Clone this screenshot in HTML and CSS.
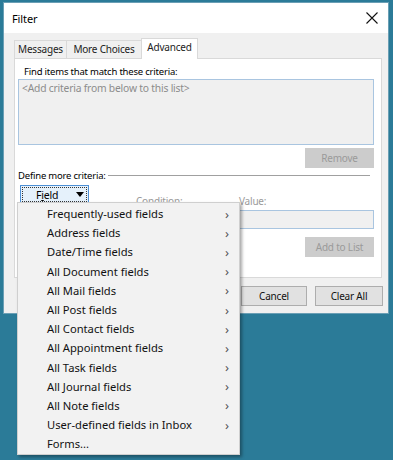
FILE: index.html
```html
<!DOCTYPE html>
<html>
<head>
<meta charset="utf-8">
<link rel="stylesheet" href="styles.css">
</head>
<body>
<div class="dialog">
  <div class="titlebar">
    <span class="title">Filter</span>
    <svg class="close" width="12" height="12" viewBox="0 0 12 12"><path d="M0.5 0.5 L11.5 11.5 M11.5 0.5 L0.5 11.5" stroke="#111" stroke-width="1.1" fill="none"/></svg>
  </div>
  <div class="body">
    <div class="tabs">
      <div class="tab t1">Messages</div>
      <div class="tab t2">More Choices</div>
      <div class="tab active">Advanced</div>
    </div>
    <div class="panel">
      <div class="find">Find items that match these criteria:</div>
      <div class="listbox">&lt;Add criteria from below to this list&gt;</div>
      <div class="row-right remove"><div class="btn disabled w69">Remove</div></div>
      <div class="define"><span>Define more criteria:</span><div class="rule"></div></div>
      <div class="crit">
        <div class="fieldbtn"><div class="fb-in"><span class="fb-text">F<u>i</u>eld</span><span class="tri"></span></div></div>
        <div class="lbl-gray">Condition:</div>
        <div class="lbl-gray">Value:</div>
      </div>
      <div class="row-right"><div class="input"></div></div>
      <div class="row-right add"><div class="btn disabled w69">Add to List</div></div>
    </div>
    <div class="footer">
      <div class="btn w66">OK</div>
      <div class="btn w66">Cancel</div>
      <div class="btn w68">Clear All</div>
    </div>
  </div>
</div>
<div class="menu">
  <div class="mi"><span>Frequently-used fields</span><span class="chev">&rsaquo;</span></div>
  <div class="mi"><span>Address fields</span><span class="chev">&rsaquo;</span></div>
  <div class="mi"><span>Date/Time fields</span><span class="chev">&rsaquo;</span></div>
  <div class="mi"><span>All Document fields</span><span class="chev">&rsaquo;</span></div>
  <div class="mi"><span>All Mail fields</span><span class="chev">&rsaquo;</span></div>
  <div class="mi"><span>All Post fields</span><span class="chev">&rsaquo;</span></div>
  <div class="mi"><span>All Contact fields</span><span class="chev">&rsaquo;</span></div>
  <div class="mi"><span>All Appointment fields</span><span class="chev">&rsaquo;</span></div>
  <div class="mi"><span>All Task fields</span><span class="chev">&rsaquo;</span></div>
  <div class="mi"><span>All Journal fields</span><span class="chev">&rsaquo;</span></div>
  <div class="mi"><span>All Note fields</span><span class="chev">&rsaquo;</span></div>
  <div class="mi"><span>User-defined fields in Inbox</span><span class="chev">&rsaquo;</span></div>
  <div class="mi"><span>Forms...</span></div>
</div>
</body>
</html>
```
FILE: styles.css
```css
html, body { margin: 0; padding: 0; }
body {
  background: #2b7b98;
  width: 393px;
  height: 460px;
  overflow: hidden;
  font-family: "Segoe UI", "Noto Sans", sans-serif;
  font-size: 9.5px;
  letter-spacing: -0.2px;
  color: #000;
  position: relative;
}
.dialog {
  margin: 3px 0 0 4px;
  width: 384px;
  height: 310px;
  background: #f0f0f0;
  box-shadow: 0 0 0 1px #6a9fb5;
}
.titlebar {
  height: 30px;
  background: #fff;
  display: flex;
  align-items: center;
  justify-content: space-between;
  padding: 0 10px 0 8px;
}
.title { font-size: 11px; letter-spacing: -0.1px; }
.close { display: block; }
.body { padding: 5px 5px 0 10px; }
.tabs { display: flex; height: 20px; align-items: flex-end; }
.tab {
  height: 18px;
  box-sizing: border-box;
  border: 1px solid #d9d9d9;
  border-bottom: none;
  background: #f0f0f0;
  line-height: 17px;
  text-align: center;
  white-space: nowrap;
  color: #222;
  font-size: 10px;
}
.t1 { width: 53px; }
.t2 { width: 75px; border-left: none; }
.tab.active {
  height: 21px;
  width: 57px;
  background: #fff;
  position: relative;
  top: 1px;
  margin-left: -1px;
  line-height: 17px;
}
.panel {
  width: 368px;
  height: 220px;
  box-sizing: border-box;
  background: #fff;
  border: 1px solid #d9d9d9;
  padding: 5px 7px 0 3px;
}
.find { padding-left: 6px; height: 15px; line-height: 15px; }
.listbox {
  height: 66px;
  box-sizing: border-box;
  border: 1px solid #a9c5e0;
  background: #f0f0f0;
  color: #8c8c8c;
  padding: 1px 3px;
  line-height: 15px;
  font-size: 10.3px;
}
.row-right { display: flex; justify-content: flex-end; }
.remove { margin-top: 3px; }
.btn {
  height: 20px;
  box-sizing: border-box;
  border: 1px solid #adadad;
  background: #e1e1e1;
  text-align: center;
  line-height: 18px;
  font-size: 10px;
  color: #111;
}
.btn.disabled { background: #cccccc; border-color: #cccccc; color: #9a9a9a; }
.w69 { width: 69px; }
.w66 { width: 66px; }
.w68 { width: 68px; }
.define {
  display: flex;
  align-items: center;
  height: 15px;
  gap: 2px;
}
.define .rule { flex: 1; height: 1px; background: #a0a0a0; margin-right: 4px; }
.crit {
  display: grid;
  grid-template-columns: 118px 103px 1fr;
  margin-top: 2px;
  height: 19px;
  align-items: end;
}
.fieldbtn {
  width: 69px;
  height: 19px;
  box-sizing: border-box;
  border: 1px solid #4d90d6;
  background: #e5f1fb;
  padding: 1px;
  margin-left: 2px;
}
.fb-in {
  display: flex;
  align-items: center;
  height: 100%;
  box-sizing: border-box;
  border: 1px dotted #333;
  line-height: 14px;
  padding-left: 13px;
  font-size: 10.5px;
}
.fb-text { width: 40px; }
.tri {
  width: 0; height: 0;
  border-left: 4.5px solid transparent;
  border-right: 4.5px solid transparent;
  border-top: 5px solid #000;
}
.lbl-gray { color: #9a9a9a; line-height: 14px; position: relative; top: 4px; font-size: 10px; }
.input {
  width: 135px;
  height: 19px;
  box-sizing: border-box;
  border: 1px solid #a9c5e0;
  background: #f0f0f0;
  margin-top: 6px;
}
.add { margin-top: 8px; }
.footer {
  display: flex;
  justify-content: flex-end;
  gap: 8px;
  margin-top: 8px;
}
.menu {
  position: absolute;
  left: 17px;
  top: 202px;
  width: 223px;
  height: 253px;
  box-sizing: border-box;
  background: #f2f2f2;
  border: 1px solid #cfcfcf;
  box-shadow: 2px 2px 3px rgba(0,0,0,0.35);
  padding-top: 1px;
  font-size: 11.2px;
  letter-spacing: 0;
}
.mi {
  height: 19.2px;
  display: flex;
  align-items: center;
  justify-content: space-between;
  padding: 0 10px 0 29px;
  color: #111;
}
.chev { color: #555; font-size: 13px; }
```
